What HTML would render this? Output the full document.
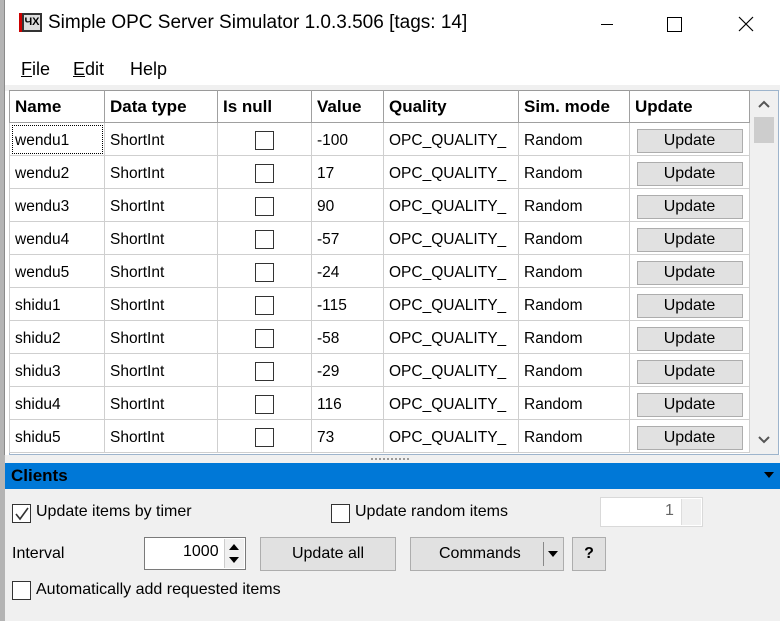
<!DOCTYPE html>
<html><head><meta charset="utf-8"><style>
*{margin:0;padding:0;box-sizing:border-box}
body{width:780px;height:621px;overflow:hidden;background:#fff;font-family:"Liberation Sans",sans-serif;position:relative;color:#000}
.a{position:absolute}
#strip{left:0;top:0;width:5px;height:621px;background:#b4b4b4;border-right:1px solid #8a8a8a}
table{position:absolute;left:9px;top:90px;border-collapse:collapse;table-layout:fixed;font-size:15.5px}
td,th{border:1px solid #cfcfcf;height:33px;padding:3px 5px 0 5px;white-space:nowrap;overflow:hidden;text-align:left}
th{font-weight:bold;font-size:17px;height:32px;padding-top:0;border-color:#9a9a9a #a0a0a0 #a0a0a0 #a0a0a0}
.cb{display:block;margin:0 auto;width:19px;height:19px;border:1px solid #333;background:#fff}
.bt{display:block;margin:0 auto;width:106px;height:24px;background:#e1e1e1;border:1px solid #adadad;text-align:center;font-size:16px;line-height:22px}
.btn{position:absolute;background:#e1e1e1;border:1px solid #adadad;text-align:center;font-size:16px}
.ck{position:absolute;width:19px;height:19px;border:1px solid #333;background:#fff}
.lbl{position:absolute;font-size:16px}
</style></head><body>
<div class="a" style="left:0;top:48px;width:780px;height:42px;background:#fff"></div>
<div class="a" style="left:0;top:85px;width:780px;height:6px;background:#f0f0f0"></div>
<div class="a" id="strip"></div>
<div class="a" style="left:19px;top:13px;width:22px;height:19px;background:#c00"></div>
<div class="a" style="left:22px;top:13px;width:20px;height:19px;background:#ddd;border:2px solid #333;font-size:11px;font-weight:bold;line-height:15px;text-align:center">ЧX</div>
<div class="a" style="left:48px;top:12px;font-size:19px">Simple OPC Server Simulator 1.0.3.506 [tags: 14]</div>
<div class="a" style="left:601px;top:24px;width:12px;height:1px;background:#000"></div>
<div class="a" style="left:667px;top:17px;width:15px;height:15px;border:1px solid #000"></div>
<svg class="a" style="left:738px;top:16px" width="16" height="16"><path d="M1 1L15 15M15 1L1 15" stroke="#000" stroke-width="1.2"/></svg>
<div class="a" style="left:21px;top:59px;font-size:18px"><u>F</u>ile</div>
<div class="a" style="left:73px;top:59px;font-size:18px"><u>E</u>dit</div>
<div class="a" style="left:130px;top:59px;font-size:18px">Help</div>
<div class="a" style="left:9px;top:90px;width:770px;height:365px;border:1px solid #9db4cc;background:#fff"></div>
<table>
<colgroup><col style="width:95px"><col style="width:113px"><col style="width:94px"><col style="width:72px"><col style="width:135px"><col style="width:111px"><col style="width:120px"></colgroup>
<tr><th>Name</th><th>Data type</th><th>Is null</th><th>Value</th><th>Quality</th><th>Sim. mode</th><th>Update</th></tr>
<tr><td style="outline:1px dotted #000;outline-offset:-3px">wendu1</td><td>ShortInt</td><td><span class="cb"></span></td><td>-100</td><td>OPC_QUALITY_</td><td>Random</td><td><span class="bt">Update</span></td></tr>
<tr><td>wendu2</td><td>ShortInt</td><td><span class="cb"></span></td><td>17</td><td>OPC_QUALITY_</td><td>Random</td><td><span class="bt">Update</span></td></tr>
<tr><td>wendu3</td><td>ShortInt</td><td><span class="cb"></span></td><td>90</td><td>OPC_QUALITY_</td><td>Random</td><td><span class="bt">Update</span></td></tr>
<tr><td>wendu4</td><td>ShortInt</td><td><span class="cb"></span></td><td>-57</td><td>OPC_QUALITY_</td><td>Random</td><td><span class="bt">Update</span></td></tr>
<tr><td>wendu5</td><td>ShortInt</td><td><span class="cb"></span></td><td>-24</td><td>OPC_QUALITY_</td><td>Random</td><td><span class="bt">Update</span></td></tr>
<tr><td>shidu1</td><td>ShortInt</td><td><span class="cb"></span></td><td>-115</td><td>OPC_QUALITY_</td><td>Random</td><td><span class="bt">Update</span></td></tr>
<tr><td>shidu2</td><td>ShortInt</td><td><span class="cb"></span></td><td>-58</td><td>OPC_QUALITY_</td><td>Random</td><td><span class="bt">Update</span></td></tr>
<tr><td>shidu3</td><td>ShortInt</td><td><span class="cb"></span></td><td>-29</td><td>OPC_QUALITY_</td><td>Random</td><td><span class="bt">Update</span></td></tr>
<tr><td>shidu4</td><td>ShortInt</td><td><span class="cb"></span></td><td>116</td><td>OPC_QUALITY_</td><td>Random</td><td><span class="bt">Update</span></td></tr>
<tr><td>shidu5</td><td>ShortInt</td><td><span class="cb"></span></td><td>73</td><td>OPC_QUALITY_</td><td>Random</td><td><span class="bt">Update</span></td></tr>
</table>
<div class="a" style="left:750px;top:91px;width:28px;height:363px;background:#f0f0f0"></div>
<div class="a" style="left:754px;top:117px;width:20px;height:26px;background:#cdcdcd"></div>
<svg class="a" style="left:757px;top:99px" width="14" height="10"><path d="M2 8L7 3L12 8" stroke="#555" stroke-width="2" fill="none"/></svg>
<svg class="a" style="left:757px;top:435px" width="14" height="10"><path d="M2 2L7 7L12 2" stroke="#555" stroke-width="2" fill="none"/></svg>
<div class="a" style="left:0;top:455px;width:780px;height:166px;background:#f0f0f0"></div>
<div class="a" style="left:0;top:455px;width:5px;height:166px;background:#b4b4b4"></div>
<div class="a" style="left:371px;top:458px;width:38px;height:2px;border-top:2px dotted #999"></div>
<div class="a" style="left:5px;top:463px;width:775px;height:26px;background:#0078d7;font-weight:bold;font-size:17px;line-height:26px;padding-left:6px">Clients</div>
<div class="a" style="left:764px;top:472px;border-left:5px solid transparent;border-right:5px solid transparent;border-top:6px solid #000"></div>
<div class="ck" style="left:12px;top:504px"></div>
<svg class="a" style="left:14px;top:506px" width="16" height="16"><path d="M2 8L6 13L14 2" stroke="#333" stroke-width="1.6" fill="none"/></svg>
<div class="lbl" style="left:36px;top:503px">Update items by timer</div>
<div class="ck" style="left:331px;top:504px"></div>
<div class="lbl" style="left:355px;top:503px">Update random items</div>
<div class="a" style="left:600px;top:497px;width:103px;height:30px;border:1px solid #d9d9d9;background:#fff"></div>
<div class="lbl" style="left:665px;top:502px;color:#666">1</div>
<div class="a" style="left:681px;top:499px;width:20px;height:26px;background:#f0f0f0;border-left:1px solid #ddd"></div>
<div class="lbl" style="left:12px;top:545px">Interval</div>
<div class="a" style="left:144px;top:537px;width:102px;height:33px;border:1px solid #7a7a7a;background:#fff"></div>
<div class="lbl" style="left:183px;top:543px">1000</div>
<div class="a" style="left:224px;top:539px;width:20px;height:29px;background:#f0f0f0;border-left:1px solid #ccc"></div>
<div class="a" style="left:229px;top:544px;border-left:5px solid transparent;border-right:5px solid transparent;border-bottom:6px solid #000"></div>
<div class="a" style="left:229px;top:557px;border-left:5px solid transparent;border-right:5px solid transparent;border-top:6px solid #000"></div>
<div class="btn" style="left:260px;top:537px;width:136px;height:34px;line-height:32px">Update all</div>
<div class="btn" style="left:410px;top:537px;width:154px;height:34px;line-height:32px;text-align:left;padding-left:28px">Commands</div>
<div class="a" style="left:543px;top:542px;width:1px;height:24px;background:#888"></div>
<div class="a" style="left:548px;top:551px;border-left:5px solid transparent;border-right:5px solid transparent;border-top:6px solid #000"></div>
<div class="btn" style="left:572px;top:537px;width:34px;height:34px;line-height:32px;font-weight:bold">?</div>
<div class="ck" style="left:12px;top:581px"></div>
<div class="lbl" style="left:36px;top:581px">Automatically add requested items</div>
</body></html>
